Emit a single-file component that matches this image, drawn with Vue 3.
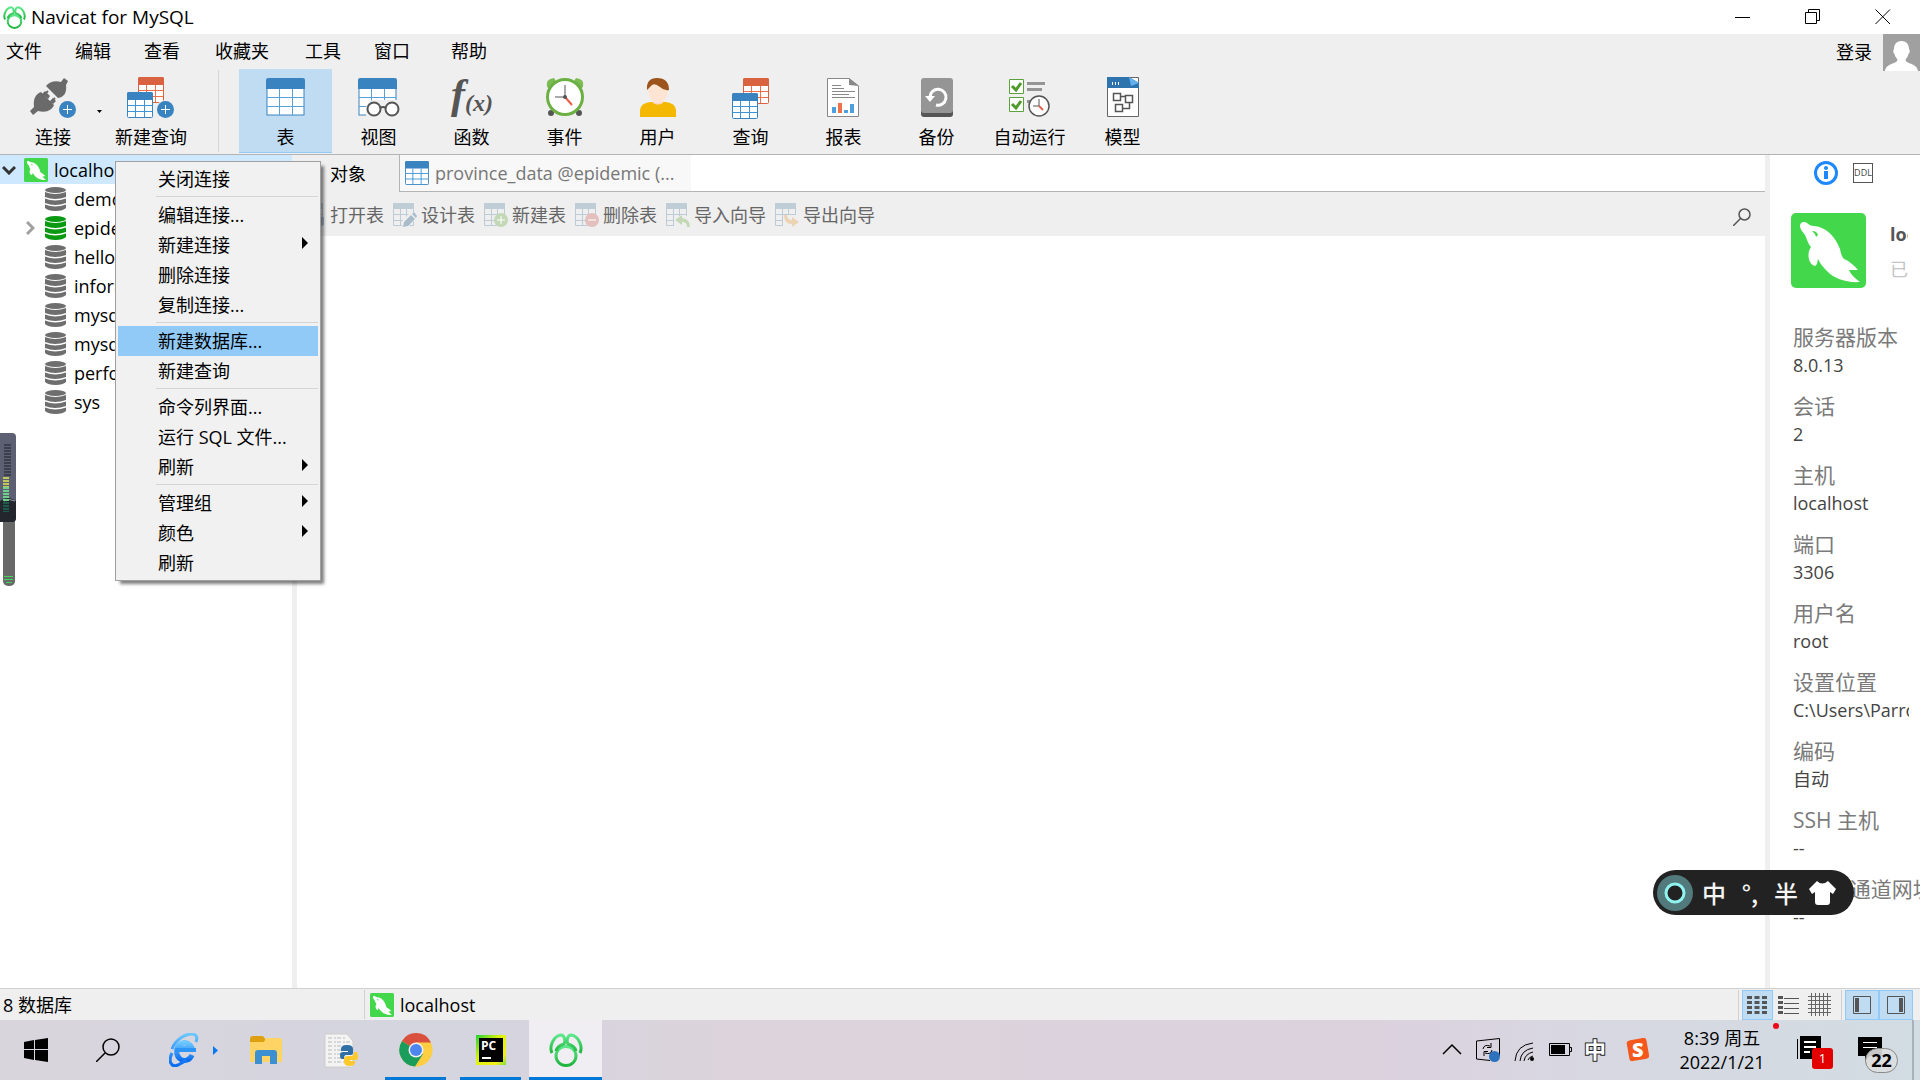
<script setup>
const menus = ['文件', '编辑', '查看', '收藏夹', '工具', '窗口', '帮助']

const tools = [
  { id: 'table', label: '表', active: true },
  { id: 'view', label: '视图' },
  { id: 'func', label: '函数' },
  { id: 'event', label: '事件' },
  { id: 'user', label: '用户' },
  { id: 'query', label: '查询' },
  { id: 'report', label: '报表' },
  { id: 'backup', label: '备份' },
  { id: 'auto', label: '自动运行' },
  { id: 'model', label: '模型' },
]

const databases = [
  { name: 'demo' },
  { name: 'epidemic', open: true },
  { name: 'hello' },
  { name: 'information_schema' },
  { name: 'mysql' },
  { name: 'mysql' },
  { name: 'performance_schema' },
  { name: 'sys' },
]

const actions = [
  { id: 'open', label: '打开表' },
  { id: 'design', label: '设计表' },
  { id: 'new', label: '新建表' },
  { id: 'delete', label: '删除表' },
  { id: 'import', label: '导入向导' },
  { id: 'export', label: '导出向导' },
]

const contextGroups = [
  [{ label: '关闭连接' }],
  [
    { label: '编辑连接...' },
    { label: '新建连接', sub: true },
    { label: '删除连接' },
    { label: '复制连接...' },
  ],
  [{ label: '新建数据库...', active: true }, { label: '新建查询' }],
  [{ label: '命令列界面...' }, { label: '运行 SQL 文件...' }, { label: '刷新', sub: true }],
  [{ label: '管理组', sub: true }, { label: '颜色', sub: true }, { label: '刷新' }],
]

const details = [
  ['服务器版本', '8.0.13'],
  ['会话', '2'],
  ['主机', 'localhost'],
  ['端口', '3306'],
  ['用户名', 'root'],
  ['设置位置', 'C:\\Users\\Parrot\\Documents'],
  ['编码', '自动'],
  ['SSH 主机', '--'],
  ['HTTP 通道网址', '--'],
]
</script>

<template>
  <div class="app">
    <svg class="defs" width="0" height="0" aria-hidden="true">
      <defs>
        <linearGradient id="catGreen" x1="0" y1="0" x2="0" y2="1">
          <stop offset="0" stop-color="#5ee88c" />
          <stop offset="1" stop-color="#1fb43c" />
        </linearGradient>
        <linearGradient id="ieBlue" x1="0" y1="0" x2="0" y2="1">
          <stop offset="0" stop-color="#6cc8ff" />
          <stop offset="1" stop-color="#0a6cf0" />
        </linearGradient>
        <linearGradient id="pcEdge" x1="0" y1="0" x2="1" y2="1">
          <stop offset="0" stop-color="#1fd13a" />
          <stop offset="0.4" stop-color="#d8f20c" />
          <stop offset="0.8" stop-color="#f4ee1c" />
          <stop offset="1" stop-color="#7be03a" />
        </linearGradient>
      </defs>
      <symbol id="dolphin" viewBox="0 0 75 75">
        <rect width="75" height="75" rx="5" fill="#43d74b" />
        <path fill="#fff" d="M9 13C9 9 13 8 16 10C18 12 20 13 23 13C36 14 45 25 49 36C50 41 51 44 53 46C58 48 63 52 67 57L58 57C60 62 64 65 69 69C55 70 42 65 36 58C31 53 29 50 27 46C26 49 27 51 24 53C18 52 15 41 20 34C17 31 16 26 14 22C11 18 9 16 9 13Z" />
        <path fill="#43d74b" d="M21 18Q26 18 27 22L25 24Q24 20 21 18Z" />
      </symbol>
      <symbol id="cat" viewBox="0 0 34 34">
        <g fill="none" stroke="url(#catGreen)" stroke-width="3" stroke-linejoin="round">
          <ellipse cx="17" cy="23" rx="10" ry="9.500" />
          <path d="M3 20C0 14 4 3 12 2C15 2 17 7 15 11C11 12 8 14 7 18" />
          <path d="M31 20C34 14 30 3 22 2C19 2 17 7 19 11C23 12 26 14 27 18" />
        </g>
      </symbol>
      <symbol id="grid-blue" viewBox="0 0 39 38">
        <rect x="1" y="1" width="37" height="36" fill="#fff" stroke="#3883c0" stroke-width="1" />
        <path d="M0 11V3Q0 0 3 0H36Q39 0 39 3V11Z" fill="#3883c0" />
        <path d="M13.500 11V37M26.500 11V37M1 19.500H38M1 28.500H38" stroke="#56a3dc" fill="none" />
      </symbol>
      <symbol id="mini-blue" viewBox="0 0 26 26">
        <rect x="0.500" y="0.500" width="25" height="25" rx="1" fill="#fff" stroke="#3883c0" />
        <path d="M0 8V2Q0 0 2 0H24Q26 0 26 2V8Z" fill="#3883c0" />
        <path d="M8.500 8V25M17.500 8V25M1 13.500H25M1 19.500H25" stroke="#3e94d6" fill="none" />
      </symbol>
      <symbol id="mini-red" viewBox="0 0 26 26">
        <rect x="0.500" y="0.500" width="25" height="25" rx="1" fill="#fff" stroke="#d96241" />
        <path d="M0 8V2Q0 0 2 0H24Q26 0 26 2V8Z" fill="#d96241" />
        <path d="M8.500 8V25M17.500 8V25M1 13.500H25M1 19.500H25" stroke="#f0704c" fill="none" />
      </symbol>
      <symbol id="plus" viewBox="0 0 17 17">
        <circle cx="8.500" cy="8.500" r="8.500" fill="#3883c0" />
        <path d="M8.500 4V13M4 8.500H13" stroke="#fff" />
      </symbol>
    </svg>

    <header class="titlebar">
      <svg class="title-icon"><use href="#cat" /></svg>
      <h1>Navicat for MySQL</h1>
      <div class="window-controls">
        <button aria-label="最小化"><svg width="16" height="16"><path d="M0 8.500H15" stroke="#000" /></svg></button>
        <button aria-label="还原"><svg width="16" height="16"><path d="M.5 3.500H11.500V14.500H.5ZM3.500 3V.5H14.500V11.500H12" fill="none" stroke="#000" /></svg></button>
        <button aria-label="关闭"><svg width="16" height="16"><path d="M.5 .5L15 15M15 .5L.5 15" stroke="#000" /></svg></button>
      </div>
    </header>

    <div class="menubar">
      <nav>
        <button v-for="m in menus" :key="m">{{ m }}</button>
      </nav>
      <button class="login">登录</button>
      <svg class="avatar" viewBox="0 0 37 37">
        <rect width="37" height="37" fill="#a0a0a0" />
        <path fill="#fff" d="M18.500 7C24 7 26 11 26 15C27 16 27 19 25.500 20C25 23 23 24 22.500 26C23 30 34 29 35 37H2C3 29 14 30 14.500 26C14 24 12 23 11.500 20C10 19 10 16 11 15C11 11 13 7 18.500 7Z" />
      </svg>
    </div>

    <div class="toolbar">
      <button class="tool connect">
        <svg viewBox="0 0 64 46">
          <g fill="#6a6a6a">
            <path d="M43 4L47 7L45 11C46 19 43 23 37 24L25 12C28 8 34 6 40 8Z" />
            <path d="M9 37L13 33C12 24 15 20 20 18L33 31C31 36 26 39 17 37L12 41Z" />
            <path d="M24 17L29 22L27 25L21 20ZM32 24L35 27L32 30L29 27Z" />
          </g>
          <path d="M21 23L27 17M28 30L34 24" stroke="#6a6a6a" stroke-width="2" />
          <use href="#plus" x="38" y="27" width="17" height="17" />
        </svg>
        <span>连接</span>
      </button>
      <svg class="caret" viewBox="0 0 5 3"><path d="M0 0H5L2.500 3Z" /></svg>
      <button class="tool new-query">
        <svg viewBox="0 0 64 46">
          <use href="#mini-red" x="19" y="3" width="26" height="26" />
          <use href="#mini-blue" x="8" y="18" width="26" height="26" />
          <circle cx="46.500" cy="35.500" r="9.500" fill="#efefef" />
          <use href="#plus" x="38" y="27" width="17" height="17" />
        </svg>
        <span>新建查询</span>
      </button>
      <div class="divider"></div>
      <button v-for="t in tools" :key="t.id" class="tool" :class="{ active: t.active }">
        <svg viewBox="0 0 64 46">
          <use v-if="t.id === 'table'" href="#grid-blue" x="12" y="4" width="39" height="38" />
          <g v-else-if="t.id === 'view'">
            <use href="#grid-blue" x="11" y="4" width="39" height="38" />
            <path d="M19 46V34Q20 26 28 26H64V46Z" fill="#efefef" />
            <g fill="#fff" stroke="#555" stroke-width="2">
              <circle cx="27" cy="35" r="6.500" /><circle cx="45" cy="35" r="6.500" />
              <path d="M33 34Q36 32 39 34" fill="none" />
            </g>
          </g>
          <g v-else-if="t.id === 'func'" fill="#555" class="fx">
            <text x="11" y="34" font-size="42">f</text>
            <text x="25" y="37" font-size="24">(x)</text>
          </g>
          <g v-else-if="t.id === 'event'">
            <path d="M14 13Q12 5 21 4L24 9L17 15ZM50 13Q52 5 43 4L40 9L47 15Z" fill="#7abb52" />
            <circle cx="18" cy="39" r="3" fill="#555" /><circle cx="46" cy="39" r="3" fill="#555" />
            <circle cx="32" cy="23" r="17.500" fill="#fff" stroke="#6cb044" stroke-width="3" />
            <path d="M32 11V23H22" fill="none" stroke="#555" />
            <path d="M32 23L39 31" stroke="#e8604c" stroke-width="2" /><circle cx="32" cy="23" r="2" fill="#555" />
          </g>
          <g v-else-if="t.id === 'user'">
            <path d="M14 43V36Q15 29 24 28H40Q49 29 50 36V43Z" fill="#f5b800" />
            <path d="M27 25H37V29Q32 32 27 29Z" fill="#fbd9c3" />
            <path d="M22 12Q22 5 32 5Q42 6 42 14Q42 22 38 27Q32 31 26 27Q22 22 22 12Z" fill="#fde4d3" />
            <path d="M21 16Q20 4 31 4Q43 4 43 16Q38 17 34 13Q29 9 26 11Q24 13 21 16Z" fill="#9c541c" />
          </g>
          <g v-else-if="t.id === 'query'">
            <use href="#mini-red" x="24" y="4" width="26" height="26" />
            <use href="#mini-blue" x="13" y="19" width="26" height="26" />
          </g>
          <g v-else-if="t.id === 'report'">
            <path d="M15.500 4.500H37L46.500 12V42.500H15.500Z" fill="#fff" stroke="#888" />
            <path d="M37 4L47 12L37 11Z" fill="#888" />
            <path d="M20 11.500H29M20 14.500H32M20 17.500H43M20 20.500H37M20 23.500H43" stroke="#888" />
            <path d="M20 33H24V39H20ZM32 36H36V39H32ZM38 30H42V39H38Z" fill="#4ba0dd" />
            <path d="M26 29H30V39H26Z" fill="#f0704c" />
          </g>
          <g v-else-if="t.id === 'backup'">
            <rect x="16" y="8" width="32" height="35" rx="3" fill="#555" />
            <rect x="16" y="4" width="32" height="35" rx="3" fill="#959595" />
            <path d="M25 23A8 8 0 1 1 31 31" fill="none" stroke="#fff" stroke-width="3" />
            <path d="M20 22H30L25 28Z" fill="#fff" />
          </g>
          <g v-else-if="t.id === 'auto'">
            <path d="M11.500 5.500H25.500V19.500H11.500ZM11.500 23.500H25.500V37.500H11.500Z" fill="#fff" stroke="#5ca03a" />
            <path d="M14 12L18 16L23 9M14 30L18 34L23 27" fill="none" stroke="#4f9a2c" stroke-width="3" />
            <path d="M29 9.500H47M29 15.500H44" stroke="#959595" stroke-width="3" />
            <path d="M29 27.500H33" stroke="#959595" stroke-width="3" />
            <circle cx="41" cy="32" r="10" fill="#fff" stroke="#555" stroke-width="1.500" />
            <path d="M41 25V32H35" fill="none" stroke="#555" /><path d="M41 32L45 36" stroke="#e8604c" stroke-width="2" />
          </g>
          <g v-else>
            <path d="M16.500 3.500H47.500V42.500H16.500Z" fill="#fff" stroke="#666" />
            <path d="M16 3H38L48 9V14H16Z" fill="#2d74ae" /><path d="M38 3L48 9L40 12Z" fill="#62b0ee" />
            <path d="M21.500 8V11M24.500 8V11M27.500 8V11" stroke="#fff" />
            <path d="M22.500 19.500H29.500V26.500H22.500ZM34.500 21.500H41.500V28.500H34.500ZM24.500 30.500H31.500V37.500H24.500ZM30 22.500H34M32 34.500H38.500V29" fill="none" stroke="#555" stroke-width="1.500" />
          </g>
        </svg>
        <span>{{ t.label }}</span>
      </button>
    </div>

    <main class="workspace">
      <aside class="tree">
        <div class="row root">
          <svg class="chevron" viewBox="0 0 14 10"><path d="M1 2L7 8L13 2" fill="none" stroke="#333" stroke-width="3" /></svg>
          <svg class="conn-icon"><use href="#dolphin" /></svg>
          <span>localhost</span>
        </div>
        <ul>
          <li v-for="(d, i) in databases" :key="i" class="row" :class="{ open: d.open }">
            <span class="expander">
              <svg v-if="d.open" viewBox="0 0 9 14"><path d="M1 1L7 7L1 13" fill="none" stroke="#a0a0a0" stroke-width="3" /></svg>
            </span>
            <svg class="db-icon" viewBox="0 0 21 24">
              <ellipse cx="10.500" cy="3" rx="10.500" ry="3" />
              <path d="M0 5Q10 9 21 5V10Q10 14 0 10ZM0 11.500Q10 15.500 21 11.500V16Q10 20 0 16ZM0 17.500Q10 21.500 21 17.500V21Q18 24 10.500 24Q3 24 0 21Z" />
            </svg>
            <span>{{ d.name }}</span>
          </li>
        </ul>
      </aside>

      <section class="content">
        <div class="tabs">
          <button class="tab current">对象</button>
          <button class="tab other">
            <svg class="tab-icon"><use href="#mini-blue" /></svg>
            <span>province_data @epidemic (...</span>
          </button>
          <div class="tab-space"></div>
        </div>
        <div class="actions">
          <button v-for="a in actions" :key="a.id" class="action" disabled>
            <svg viewBox="0 0 24 24">
              <path d="M.5 6V22.500H20.500V6M7.500 6V22M13.500 6V22M1 11.500H20M1 17.500H20" fill="none" stroke="#bccbd6" />
              <path d="M0 0H21V6H0Z" fill="#bfcdd7" />
              <path v-if="a.id === 'open'" d="M12 14H22V22H12Z" fill="#afc0cd" />
              <g v-else-if="a.id === 'design'">
                <path d="M9 24L10 17L18 9H24V15L16 23Z" fill="#efefef" />
                <path d="M10 24L11 19L18 12L22 16L15 23ZM19 11L21 9L24 13L23 15Z" fill="#a8bccb" />
              </g>
              <g v-else-if="a.id === 'new'">
                <circle cx="17" cy="17" r="7" fill="#c3d8b6" /><path d="M17 13V21M13 17H21" stroke="#fff" />
              </g>
              <g v-else-if="a.id === 'delete'">
                <circle cx="17" cy="17" r="7" fill="#e3c0bd" /><path d="M13 17H21" stroke="#fff" />
              </g>
              <g v-else-if="a.id === 'import'">
                <path d="M8 24V13H24V24Z" fill="#efefef" />
                <path d="M9 17L16 12V15Q24 16 24 24H21Q21 19 16 19V22Z" fill="#c3d8b6" />
              </g>
              <g v-else>
                <path d="M8 24V12H24V24Z" fill="#efefef" />
                <path d="M9 12H12Q12 17 17 17V14L24 19L17 24V21Q9 21 9 12Z" fill="#ebd3b4" />
              </g>
            </svg>
            <span>{{ a.label }}</span>
          </button>
          <button class="find" aria-label="搜索">
            <svg viewBox="0 0 18 18"><circle cx="11.500" cy="6.500" r="5.500" fill="none" stroke="#555" stroke-width="1.500" /><path d="M7.500 10.500L0 18" stroke="#555" stroke-width="1.500" /></svg>
          </button>
        </div>
        <div class="objects"></div>
      </section>

      <aside class="info">
        <div class="info-tabs">
          <button aria-label="常规">
            <svg width="24" height="24"><circle cx="12" cy="12" r="10.500" fill="none" stroke="#1e88ff" stroke-width="3" /><circle cx="12" cy="7" r="2" fill="#1e88ff" /><path d="M12 10V18" stroke="#1e88ff" stroke-width="4" /></svg>
          </button>
          <button class="ddl">DDL</button>
        </div>
        <div class="info-head">
          <svg class="logo"><use href="#dolphin" /></svg>
          <div class="info-name">
            <strong>localhost</strong>
            <span>已连接</span>
          </div>
        </div>
        <dl>
          <div v-for="[k, v] in details" :key="k" class="prop">
            <dt>{{ k }}</dt>
            <dd>{{ v }}</dd>
          </div>
        </dl>
      </aside>

      <div class="context-menu" role="menu">
        <div v-for="(g, i) in contextGroups" :key="i" class="group">
          <button v-for="(c, j) in g" :key="j" role="menuitem" :class="{ active: c.active }">
            <span>{{ c.label }}</span>
            <svg v-if="c.sub" viewBox="0 0 6 12"><path d="M0 0L6 6L0 12Z" /></svg>
          </button>
        </div>
      </div>

      <svg class="volume" viewBox="0 0 18 156">
        <rect x="3" y="70" width="12" height="83" rx="5" fill="#686868" />
        <path d="M0 0H12Q16 0 16 4V85Q16 89 12 89H0Z" fill="#5c6072" />
        <path d="M0 68Q8 62 16 68V85Q16 89 12 89H0Z" fill="#23262d" />
        <path d="M4 68Q9 65 15 68" fill="none" stroke="#9a9ea8" />
        <path d="M7.500 11V43" stroke="#3c404e" stroke-width="7" stroke-dasharray="2 1" />
        <path d="M6 44V54" stroke="#c0c958" stroke-width="6" stroke-dasharray="2 1" />
        <path d="M6 54V68" stroke="#6fd08c" stroke-width="6" stroke-dasharray="2 1" />
        <path d="M6 69V79" stroke="#1d5a4e" stroke-width="6" stroke-dasharray="2 1" />
        <path d="M4 143.500H13M4 146.500H13M6 149.500H12" stroke="#3fd65c" />
      </svg>
    </main>

    <footer class="statusbar">
      <span class="count">8 数据库</span>
      <div class="status-conn">
        <svg class="conn-icon"><use href="#dolphin" /></svg>
        <span>localhost</span>
      </div>
      <div class="view-buttons">
        <button class="active" aria-label="图标"><svg width="21" height="18"><path d="M0 1.500H21M0 6.500H21M0 11.500H21M0 16.500H21" stroke="#555" stroke-width="3" stroke-dasharray="5 2.500" /></svg></button>
        <button aria-label="列表"><svg width="21" height="18"><path d="M0 1.500H5M0 6.500H5M0 11.500H5M0 16.500H5" stroke="#555" stroke-width="3" /><path d="M6 2.500H21M6 7.500H21M6 12.500H21M6 17.500H21" stroke="#555" /></svg></button>
        <button aria-label="网格"><svg width="23" height="23"><path d="M3.500 0V23M7.500 0V23M11.500 0V23M15.500 0V23M19.500 0V23M0 3.500H23M0 7.500H23M0 11.500H23M0 15.500H23M0 19.500H23" stroke="#666" /></svg></button>
      </div>
      <div class="pane-buttons">
        <button class="active" aria-label="左窗格"><svg width="18" height="18"><path d="M.5 .5H17.500V17.500H.5Z" fill="none" stroke="#555" /><path d="M2 2H6V16H2Z" fill="#555" /></svg></button>
        <button class="active" aria-label="右窗格"><svg width="18" height="18"><path d="M.5 .5H17.500V17.500H.5Z" fill="none" stroke="#555" /><path d="M12 2H16V16H12Z" fill="#555" /></svg></button>
      </div>
    </footer>

    <div class="taskbar">
      <div class="start">
        <button aria-label="开始"><svg width="24" height="24"><path d="M0 4L10 2V11H0ZM11 2L24 0V11H11ZM0 12H10V22L0 20ZM11 12H24V24L11 22Z" /></svg></button>
        <button aria-label="搜索"><svg width="24" height="24"><circle cx="15" cy="9" r="8" fill="none" stroke="#000" stroke-width="1.500" /><path d="M9 15L0 24" stroke="#000" stroke-width="1.500" /></svg></button>
      </div>
      <button class="ie" aria-label="Internet Explorer">
        <svg width="30" height="34" viewBox="0 0 30 34">
          <path d="M22 22A8 9 0 1 1 22 15H9" fill="none" stroke="url(#ieBlue)" stroke-width="5" transform="translate(1 0)" />
          <path d="M6 17H27" stroke="#2d94f8" stroke-width="4" />
          <path d="M3 20C-1 28 2 35 9 32C13 30 15 29 17 27M3 16C6 7 17 0 24 1C29 2 28 6 27 9" fill="none" stroke="url(#ieBlue)" stroke-width="3" />
        </svg>
      </button>
      <svg class="ie-more" viewBox="0 0 5 9"><path d="M0 0L5 4.500L0 9Z" fill="#0a78f0" /></svg>
      <div class="apps">
        <button aria-label="文件资源管理器">
          <svg width="32" height="28"><path d="M0 3Q0 0 3 0H13L16 4H32V26H0Z" fill="#dfa010" /><path d="M0 6H14L16 2H30Q32 2 32 5V26H0Z" fill="#ffd464" /><path d="M5 28V17Q5 14 8 14H24Q27 14 27 17V28H20V20H12V28Z" fill="#3c90d2" /></svg>
        </button>
        <button aria-label="Python">
          <svg width="34" height="35" viewBox="0 0 34 35">
            <path d="M1 1H23L29 8V34H1Z" fill="#f4f4f4" stroke="#ccc" />
            <path d="M4 5H22M4 9H26M4 13H26M4 17H26M4 21H26M4 25H20M4 29H20" stroke="#bbb" stroke-dasharray="4 2 2 1" />
            <path d="M17 19V16Q17 12 23 12Q29 12 29 16V20Q29 22 26 22H22Q20 22 20 26H18Q16 26 16 22Q16 19 19 19H24V18H17Z" fill="#2f6fa5" />
            <path d="M33 19Q35 24 33 27H26V28H31V30Q30 33 26 33Q20 33 20 29V26Q20 23 24 23H28Q30 22 30 19Z" fill="#fdc92c" />
          </svg>
        </button>
        <button class="running" aria-label="Chrome">
          <svg width="34" height="34" viewBox="0 0 34 34">
            <circle cx="17" cy="17" r="16.500" fill="#ffcd42" />
            <path d="M17 17L3 8A16.500 16.500 0 0 1 32 9.500H17Z" fill="#d9503f" />
            <path d="M17 17L3 8A16.500 16.500 0 0 0 16 33.500L24 21Z" fill="#1a9c5b" />
            <circle cx="17" cy="17" r="7.500" fill="#f1f1f1" /><circle cx="17" cy="17" r="6" fill="#4c86ee" />
          </svg>
        </button>
        <button class="running" aria-label="PyCharm">
          <svg width="30" height="30"><rect width="30" height="30" fill="url(#pcEdge)" /><rect x="3" y="3" width="24" height="24" /><text x="5" y="15" class="pc">PC</text><path d="M6 23H15" stroke="#fff" stroke-width="2" /></svg>
        </button>
        <button class="running focused" aria-label="Navicat"><svg width="34" height="34"><use href="#cat" /></svg></button>
      </div>

      <div class="tray">
        <svg viewBox="0 0 24 24"><path d="M3 16L12 7L21 16" fill="none" stroke="#000" stroke-width="1.500" /></svg>
        <svg viewBox="0 0 24 24"><path d="M.5 3L23.500 .5V18M.5 3V21L14 22.500" fill="none" stroke="#000" /><path d="M7 11Q8 6 14 8M15 5V9.500H11M16 12Q15 17 9 15M8 18V13.500H12" fill="none" stroke="#000" /><circle cx="18.500" cy="18.500" r="5.500" fill="#2d72bd" /></svg>
        <svg viewBox="0 0 24 24"><g fill="none" stroke="#000"><path d="M3 23Q4 7 21 5M8 23Q9 12 21 10M12 23Q13 16 21 14" /><path d="M16 22Q17 19 21 18" /></g><circle cx="20" cy="21" r="2" /></svg>
        <svg viewBox="0 0 24 24"><path d="M1.500 5.500H21.500V17.500H1.500ZM22 9.500H23.500V13.500H22" fill="none" stroke="#000" /><path d="M3 7H17V16H3Z" /></svg>
        <svg viewBox="0 0 24 24"><text x="0" y="20" class="ime-mark">中</text></svg>
        <svg class="sogou" viewBox="0 0 24 24"><rect x="2" y="1" width="20" height="21" rx="3" fill="#f4581c" transform="rotate(-10 12 12)" /><text x="6" y="19" class="sogou-s">S</text></svg>
        <time><span>8:39 周五</span><span>2022/1/21</span></time>
        <div class="notice">
          <svg viewBox="0 0 36 34"><path d="M3 3H24V26H3Z" /><path d="M.5 6V26" stroke="#000" /><path d="M7 9H19M7 14H19M7 19H13" stroke="#fff" stroke-width="2" /></svg>
          <span>1</span>
        </div>
        <div class="notice messages">
          <svg viewBox="0 0 36 34"><path d="M3 4H27V23H15L10 28V23H3Z" /><path d="M8 9.500H22M8 14.500H22" stroke="#fff" /></svg>
          <span>22</span>
        </div>
        <i class="recording"></i>
        <button class="show-desktop" aria-label="显示桌面"></button>
      </div>
    </div>

    <div class="ime">
      <svg class="ime-ring" viewBox="0 0 36 36"><circle cx="18" cy="18" r="18" fill="#527a7c" /><circle cx="18" cy="18" r="9" fill="#222" stroke="#8ff3f0" stroke-width="3" /></svg>
      <span>中</span><span>°,</span><span>半</span>
      <svg class="shirt" viewBox="0 0 27 24"><path fill="#fff" d="M8 0Q13 5 19 0L27 8L24 13L21 11V21Q21 24 18 24H9Q6 24 6 21V11L3 13L0 8Z" /></svg>
    </div>
  </div>
</template>

<style>
body {
  margin: 0;
}
</style>

<style scoped>
* {
  box-sizing: border-box;
}
.app {
  position: relative;
  display: flex;
  flex-direction: column;
  min-height: 100vh;
  overflow: hidden;
  background: #efefef;
  color: #000;
  font: 18px/24px 'Open Sans', 'Noto Sans CJK SC', sans-serif;
}
.defs {
  position: absolute;
}
button {
  margin: 0;
  padding: 0;
  border: 0;
  background: none;
  color: inherit;
  font: inherit;
  white-space: nowrap;
}
svg {
  display: block;
  flex: none;
}
.titlebar {
  display: flex;
  align-items: center;
  height: 34px;
  padding: 0 2px 0 3px;
  background: #fff;
}
.title-icon {
  width: 23px;
  height: 23px;
}
h1 {
  flex: 1;
  margin: 0 0 0 5px;
  font-size: 19px;
  font-weight: 400;
}
.window-controls {
  display: flex;
}
.window-controls button {
  display: grid;
  place-items: center;
  width: 70px;
  height: 34px;
}
.menubar {
  display: flex;
  align-items: flex-start;
  height: 34px;
}
.menubar nav {
  display: grid;
  grid-template-columns: 69px 69px 71px 90px 69px 77px 60px;
  flex: 1;
  padding-left: 6px;
}
.menubar nav button {
  height: 34px;
  text-align: left;
}
.login {
  height: 36px;
  margin-right: 11px;
}
.avatar {
  width: 37px;
  height: 37px;
}
.toolbar {
  display: flex;
  align-items: flex-start;
  height: 87px;
  padding: 1px 0 0 9px;
  border-bottom: 1px solid #b4b4b4;
}
.tool {
  display: flex;
  flex: none;
  flex-direction: column;
  align-items: center;
  gap: 5px;
  width: 93px;
  height: 84px;
  padding-top: 5px;
  border-bottom: 1px solid transparent;
}
.tool svg {
  width: 64px;
  height: 46px;
  overflow: visible;
}
.tool.active {
  border-color: #91c9f7;
  background: #c0dcf3;
}
.connect {
  width: 88px;
}
.new-query {
  width: 98px;
}
.toolbar .caret {
  width: 5px;
  height: 3px;
  margin-top: 41px;
}
.divider {
  width: 1px;
  height: 82px;
  margin: 1px 20px 0 18px;
  background: #d6d6d6;
}
.fx {
  font-family: 'Liberation Serif', serif;
  font-style: italic;
  font-weight: 700;
}
.workspace {
  position: relative;
  display: flex;
  flex: 1;
  min-height: 0;
}
.tree {
  flex: none;
  width: 292px;
  overflow: hidden;
  background: #fff;
}
.tree ul {
  margin: 0;
  padding: 0;
  list-style: none;
}
.row {
  display: flex;
  align-items: center;
  height: 29px;
}
.root {
  padding-left: 2px;
  background: #cde8ff;
}
.chevron {
  width: 14px;
  height: 10px;
  margin-right: 8px;
}
.conn-icon {
  width: 24px;
  height: 24px;
}
.root span,
.status-conn span {
  margin-left: 6px;
}
.expander {
  width: 45px;
  padding-left: 26px;
}
.expander svg {
  width: 9px;
  height: 14px;
}
.db-icon {
  width: 21px;
  height: 24px;
  margin-right: 8px;
  fill: #6e6e6e;
}
.open .db-icon {
  fill: #0a9a12;
}
.content {
  display: flex;
  flex: 1;
  flex-direction: column;
  min-width: 0;
  border: solid #efefef;
  border-width: 0 5px;
}
.tabs {
  display: flex;
  height: 37px;
}
.tab {
  flex: none;
}
.current {
  width: 102px;
  padding-left: 33px;
  background: #efefef;
  text-align: left;
}
.other {
  display: flex;
  align-items: center;
  gap: 6px;
  width: 292px;
  padding-left: 5px;
  border: solid #b4b4b4;
  border-width: 0 0 1px 1px;
  background: #f8f8f8;
  color: #777;
}
.tab-icon {
  width: 24px;
  height: 24px;
}
.tab-space {
  flex: 1;
  border-bottom: 1px solid #b4b4b4;
  background: #fff;
}
.actions {
  display: flex;
  align-items: center;
  gap: 9px;
  height: 44px;
  padding: 2px 14px 0 5px;
  background: #efefef;
}
.action {
  display: flex;
  align-items: center;
  gap: 4px;
  color: #666;
}
.action svg {
  width: 24px;
  height: 24px;
}
.find {
  margin-left: auto;
  padding-top: 3px;
}
.find svg {
  width: 18px;
  height: 18px;
}
.objects {
  flex: 1;
  background: #fff;
}
.info {
  flex: none;
  width: 150px;
  overflow: hidden;
  background: #fff;
}
.info-tabs {
  display: flex;
  align-items: center;
  gap: 15px;
  height: 36px;
  padding-left: 44px;
}
.ddl {
  width: 20px;
  height: 20px;
  border: 1px solid #555;
  color: #444;
  font-size: 9px;
  line-height: 18px;
}
.info-head {
  display: flex;
  gap: 24px;
  margin-top: 22px;
  padding: 0 12px 0 21px;
}
.logo {
  width: 75px;
  height: 75px;
}
.info-name {
  display: flex;
  flex: 1;
  flex-direction: column;
  gap: 11px;
  min-width: 0;
  padding-top: 9px;
  overflow: hidden;
  white-space: nowrap;
}
.info-name strong {
  color: #555;
}
.info-name span {
  color: #c4c4c4;
}
dl {
  margin: 36px 0 0;
  padding-left: 23px;
}
.prop {
  margin-bottom: 16px;
}
dt {
  margin-bottom: 2px;
  color: #7a7a7a;
  font-size: 21px;
  line-height: 27px;
  white-space: nowrap;
}
dd {
  margin: 0 11px 0 0;
  overflow: hidden;
  color: #444;
  white-space: nowrap;
}
.context-menu {
  position: absolute;
  top: 6px;
  left: 115px;
  width: 206px;
  padding: 2px;
  border: 1px solid #a0a0a0;
  background: #f1f1f1;
  box-shadow: 4px 4px 3px -1px rgba(0, 0, 0, 0.5);
}
.group + .group::before {
  display: block;
  height: 1px;
  margin: 2px 0 3px 38px;
  background: #d5d5d5;
  content: '';
}
.group {
  display: flow-root;
}
.group button {
  display: flex;
  align-items: center;
  justify-content: space-between;
  width: 100%;
  height: 30px;
  padding: 0 10px 0 40px;
}
.group svg {
  width: 6px;
  height: 12px;
  margin-bottom: 5px;
}
.group .active {
  background: #91c9f7;
}
.volume {
  position: absolute;
  top: 278px;
  left: 0;
  width: 18px;
  height: 156px;
}
.statusbar {
  display: flex;
  align-items: center;
  height: 32px;
  border-top: 1px solid #d0d0d0;
}
.count {
  width: 364px;
  padding-left: 3px;
}
.status-conn {
  display: flex;
  flex: 1;
  align-items: center;
  height: 29px;
  padding-left: 5px;
  border-left: 1px solid #d0d0d0;
}
.view-buttons,
.pane-buttons {
  display: flex;
  height: 30px;
  padding-left: 3px;
  border-left: 1px solid #d0d0d0;
}
.view-buttons {
  width: 103px;
}
.pane-buttons {
  margin-right: 7px;
}
.statusbar button {
  display: grid;
  place-items: center;
  width: 31px;
}
.statusbar .pane-buttons button {
  width: 34px;
}
.statusbar .active {
  border: 1px solid #91c9f7;
  background: #c0dcf3;
}
.taskbar {
  display: flex;
  align-items: center;
  height: 60px;
  background: linear-gradient(90deg, #d9d5dd, #d4d5df 24%, #dcd3dc 38%, #dbd2de 72%, #d7d8e1 84%, #d2dce3);
}
.taskbar button {
  display: grid;
  place-items: center;
  width: 73px;
  height: 60px;
}
.start {
  display: flex;
  margin-right: 3px;
}
.taskbar .start button {
  width: 72px;
}
.ie {
  margin-right: -7px;
}
.ie-more {
  width: 5px;
  height: 9px;
  margin-right: 11px;
}
.apps {
  display: flex;
  flex: 1;
  gap: 2px;
}
.running {
  background: linear-gradient(#0078d7, #0078d7) center bottom / 61px 3px no-repeat;
}
.running.focused {
  background: linear-gradient(#0078d7, #0078d7) center bottom / 100% 3px no-repeat, #f0eef2;
}
.pc {
  fill: #fff;
  font: 700 12px 'Open Sans', sans-serif;
}
.tray {
  position: relative;
  display: flex;
  align-items: center;
  gap: 12px;
  height: 60px;
}
.tray > svg {
  width: 24px;
  height: 24px;
}
.ime-mark {
  fill: #fff;
  stroke: #222;
  stroke-width: 2px;
  paint-order: stroke;
  font: 700 22px 'Noto Sans CJK SC', sans-serif;
}
.tray .sogou {
  margin-left: 6px;
}
.sogou-s {
  fill: #fff;
  font: 900 20px 'Open Sans', sans-serif;
}
time {
  display: flex;
  flex-direction: column;
  width: 90px;
  margin-left: 15px;
  text-align: center;
}
.notice {
  position: relative;
  width: 36px;
  height: 34px;
  margin-left: 18px;
}
.messages {
  width: 47px;
  margin-left: 10px;
}
.notice svg {
  width: 36px;
  height: 34px;
}
.notice span {
  position: absolute;
  top: 15px;
  left: 15px;
  width: 21px;
  height: 21px;
  border-radius: 3px;
  background: #e30000;
  color: #fff;
  font-size: 13px;
  line-height: 21px;
  text-align: center;
}
.messages span {
  left: 10px;
  width: 33px;
  height: 25px;
  border: 1px solid #888;
  border-radius: 13px;
  background: rgba(222, 222, 222, 0.9);
  color: #000;
  font-size: 18px;
  font-weight: 700;
  line-height: 23px;
}
.recording {
  position: absolute;
  top: 3px;
  right: 141px;
  width: 6px;
  height: 6px;
  border-radius: 50%;
  background: #f00018;
}
.taskbar .show-desktop {
  width: 8px;
  margin-left: -2px;
  border-left: 2px solid #a8b0ba;
}
.ime {
  position: absolute;
  right: 66px;
  bottom: 165px;
  display: flex;
  align-items: center;
  width: 201px;
  height: 45px;
  padding-left: 4px;
  border-radius: 23px;
  background: #222;
  color: #f4f4f4;
  font: 500 24px/44px 'Noto Sans CJK SC', sans-serif;
}
.ime-ring {
  width: 36px;
  height: 36px;
  margin-right: 3px;
}
.ime span {
  width: 36px;
  text-align: center;
}
.shirt {
  width: 27px;
  height: 24px;
  margin-left: 5px;
}
</style>
